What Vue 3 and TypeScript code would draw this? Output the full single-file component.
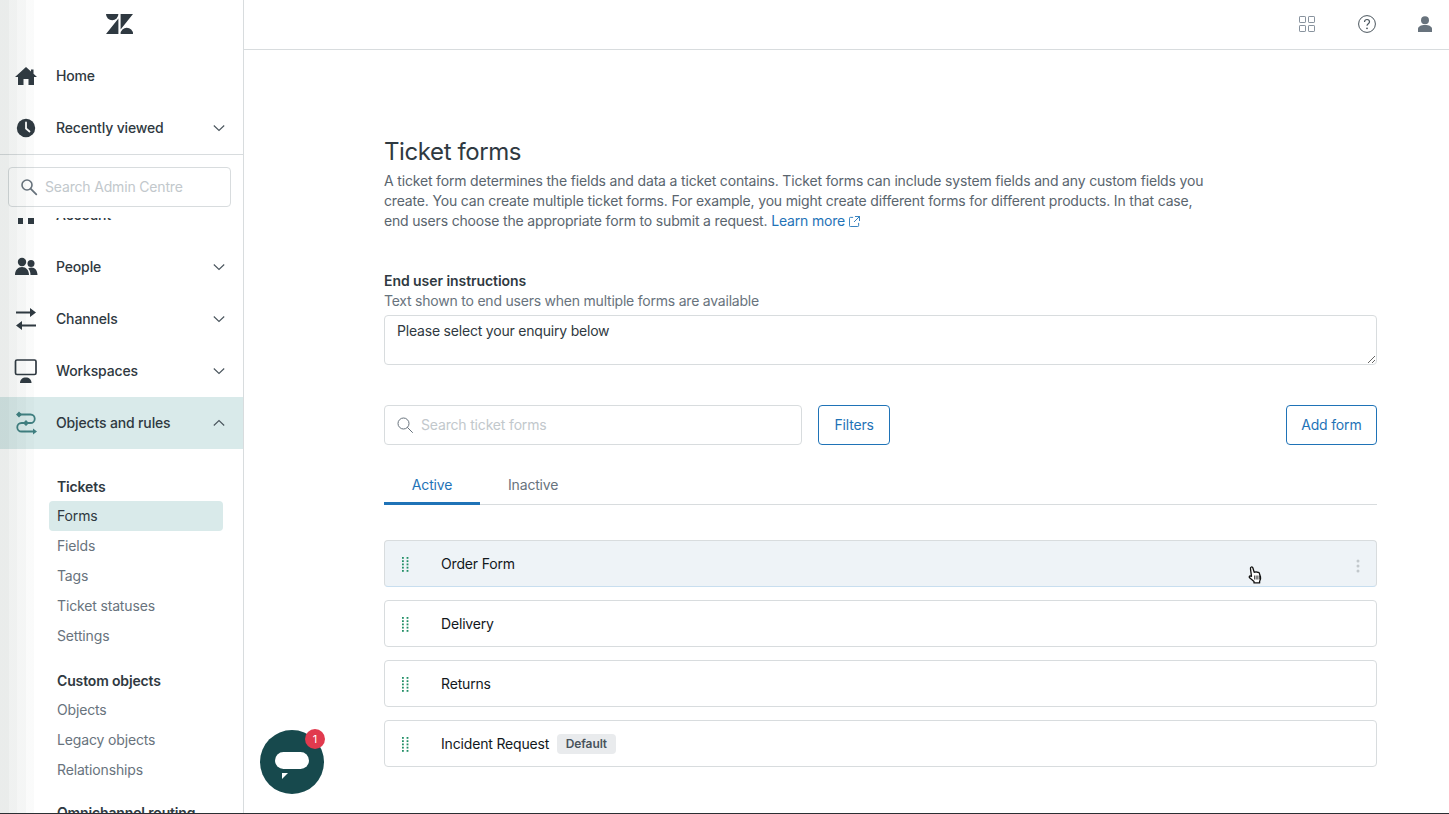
<script setup lang="ts">
import { ref } from 'vue'

interface NavItem { label: string; icon: string; chevron?: 'down' | 'up'; active?: boolean }
interface SubSection { title: string; items: { label: string; active?: boolean }[] }

const topNav: NavItem[] = [
  { label: 'Home', icon: 'home' },
  { label: 'Recently viewed', icon: 'clock', chevron: 'down' },
]
const scrollNav: NavItem[] = [
  { label: 'Account', icon: 'account' },
  { label: 'People', icon: 'people', chevron: 'down' },
  { label: 'Channels', icon: 'channels', chevron: 'down' },
  { label: 'Workspaces', icon: 'workspaces', chevron: 'down' },
  { label: 'Objects and rules', icon: 'objects', chevron: 'up', active: true },
]
const sections: SubSection[] = [
  { title: 'Tickets', items: [{ label: 'Forms', active: true }, { label: 'Fields' }, { label: 'Tags' }, { label: 'Ticket statuses' }, { label: 'Settings' }] },
  { title: 'Custom objects', items: [{ label: 'Objects' }, { label: 'Legacy objects' }, { label: 'Relationships' }] },
  { title: 'Omnichannel routing', items: [] },
]
const forms = [
  { name: 'Order Form', hover: true },
  { name: 'Delivery' },
  { name: 'Returns' },
  { name: 'Incident Request', tag: 'Default' },
]
const instructions = ref('Please select your enquiry below')
const gripDots = [0, 1, 2, 3, 4].flatMap((r) => [0, 1].map((c) => ({ x: c * 4.6, y: r * 3.25 })))
</script>

<template>
  <div class="app">
    <aside class="sidebar">
      <div class="logo">
        <svg width="27" height="20" viewBox="0 0 27 20">
          <path fill="#2f3941" d="M12.4 4.6V20H0zM12.4 0a6.2 6.2 0 0 1-12.4 0zM14.6 20a6.2 6.2 0 0 1 12.4 0zM14.6 15.400V0H27z" />
        </svg>
      </div>
      <div v-for="item in topNav" :key="item.label" class="nav-item top">
        <span class="nav-icon">
          <svg v-if="item.icon === 'home'" width="24" height="24" viewBox="0 0 24 24"><path fill="#2f3941" d="M12 4l5 4.500V6.500h2.500v4.200L23 14h-3v8h-5.500v-6h-5v6H4v-8H1z" /></svg>
          <svg v-else class="clock" width="20" height="20" viewBox="0 0 20 20"><circle cx="10" cy="10" r="9.200" fill="#2f3941" /><path d="M10 4.500V10.500l3.500 3" fill="none" stroke="#fff" stroke-width="1.800" stroke-linecap="round" /></svg>
        </span>
        <span class="nav-label">{{ item.label }}</span>
        <svg v-if="item.chevron" class="chev" width="12" height="12" viewBox="0 0 12 12"><path d="M.8 3.500 6 8.500l5.200-5" fill="none" stroke="#49545c" stroke-width="1.100" /></svg>
      </div>
      <div class="search-wrap">
        <label class="side-search">
          <svg width="18" height="18" viewBox="0 0 18 18"><circle cx="7" cy="7" r="5" fill="none" stroke="#68737d" stroke-width="1.600" /><path d="m10.800 10.800 5.500 5.500" stroke="#68737d" stroke-width="1.800" stroke-linecap="round" /></svg>
          <input placeholder="Search Admin Centre" />
        </label>
      </div>
      <div class="scroll">
        <div class="scroll-inner">
          <div v-for="item in scrollNav" :key="item.label" class="nav-item" :class="{ active: item.active }">
            <span class="nav-icon">
              <svg v-if="item.icon === 'account'" width="22" height="22" viewBox="0 0 22 22"><path fill="#2f3941" d="M4 2h5v18H4zM14 2h6v18h-6z" /></svg>
              <svg v-else-if="item.icon === 'people'" width="24" height="20" viewBox="0 0 24 20"><circle cx="8" cy="5" r="4.200" fill="#2f3941" /><circle cx="17" cy="6.500" r="3.500" fill="#2f3941" /><path fill="#2f3941" d="M1 18c0-5 3-8 7-8s7 3 7 8zM16.500 18c0-3-.8-5-2.300-6.500 1-.7 2-1 3.300-1 3.500 0 6 3 6 7.500z" /></svg>
              <svg v-else-if="item.icon === 'channels'" width="24" height="24" viewBox="0 0 24 24"><path fill="#2f3941" d="M2 4.500h14V1l6 4.500-6 4.500V6.500H2zM22 17.500H8V14l-6 4.500L8 23v-3.500h14z" /></svg>
              <svg v-else-if="item.icon === 'workspaces'" width="24" height="24" viewBox="0 0 24 24"><rect x="1.500" y="1" width="20.500" height="14.500" rx="1.500" fill="none" stroke="#2f3941" stroke-width="1.700" /><path fill="#2f3941" d="M6 24c0-3.500 2.500-5.500 5.800-5.500s5.700 2 5.700 5.500z" /></svg>
              <svg v-else width="24" height="24" viewBox="0 0 24 24"><g fill="none" stroke="#3f7f80" stroke-width="1.800"><path d="M5 3.500h11.500a4 4 0 0 1 0 8.500H7.500a4 4 0 0 0 0 8.500H20" /></g><path fill="#3f7f80" d="m5 .5 3 3-3 3-3-3zM12 9l3 3-3 3-3-3zM19 17.500l4 3-4 3z" /></svg>
            </span>
            <span class="nav-label">{{ item.label }}</span>
            <svg v-if="item.chevron === 'down'" class="chev" width="12" height="12" viewBox="0 0 12 12"><path d="M.8 3.500 6 8.500l5.200-5" fill="none" stroke="#49545c" stroke-width="1.100" /></svg>
            <svg v-else-if="item.chevron === 'up'" class="chev" width="12" height="12" viewBox="0 0 12 12"><path d="M.8 8.500 6 3.500l5.200 5" fill="none" stroke="#49545c" stroke-width="1.100" /></svg>
          </div>
          <div class="sub">
            <section v-for="s in sections" :key="s.title" class="sub-section">
              <div class="sub-title">{{ s.title }}</div>
              <div v-for="i in s.items" :key="i.label" class="sub-item" :class="{ active: i.active }">{{ i.label }}</div>
            </section>
          </div>
        </div>
      </div>
      <div class="stripes"></div>
    </aside>

    <div class="main">
      <header class="topbar">
        <svg class="grid" width="16" height="16" viewBox="0 0 16 16"><g fill="none" stroke="#87929d" stroke-width="1"><rect x=".5" y=".5" width="6" height="6" rx=".6" /><rect x="9.500" y=".5" width="6" height="6" rx=".6" /><rect x=".5" y="9.500" width="6" height="6" rx=".6" /><rect x="9.500" y="9.500" width="6" height="6" rx=".6" /></g></svg>
        <svg width="18" height="18" viewBox="0 0 18 18"><circle cx="9" cy="9" r="8.400" fill="none" stroke="#49545c" stroke-width="1" /><path d="M6.500 7c0-1.500 1.100-2.500 2.500-2.500s2.500 1 2.500 2.300c0 1.800-2.500 2-2.500 4" fill="none" stroke="#49545c" stroke-width="1.200" /><circle cx="9" cy="13.300" r=".9" fill="#49545c" /></svg>
        <svg width="16" height="16" viewBox="0 0 16 16"><circle cx="8" cy="4.200" r="4" fill="#68737d" /><path fill="#68737d" d="M1 16v-3c0-2.500 3-4 7-4s7 1.500 7 4v3z" /></svg>
      </header>
      <main class="content">
        <h1>Ticket forms</h1>
        <p class="desc">
          A ticket form determines the fields and data a ticket contains. Ticket forms can include system fields and any custom fields you create. You can create multiple ticket forms. For example, you might create different forms for different products. In that case, end users choose the appropriate form to submit a request.
          <a class="link">Learn more<svg width="11" height="11" viewBox="0 0 12 12"><path d="M4.500 1.500H1.500a1 1 0 0 0-1 1v8a1 1 0 0 0 1 1h8a1 1 0 0 0 1-1v-3M6.500.5h5v5M11.500.5l-6 6" fill="none" stroke="#1f73b7" stroke-width="1" /></svg></a>
        </p>
        <div class="field-label">End user instructions</div>
        <div class="field-hint">Text shown to end users when multiple forms are available</div>
        <textarea v-model="instructions" class="instructions"></textarea>
        <div class="toolbar">
          <label class="main-search">
            <svg width="16" height="16" viewBox="0 0 16 16"><circle cx="6.500" cy="6.500" r="5.500" fill="none" stroke="#68737d" stroke-width="1" /><path d="m10.500 10.500 5 5" stroke="#68737d" stroke-width="1" stroke-linecap="round" /></svg>
            <input placeholder="Search ticket forms" />
          </label>
          <button class="btn">Filters</button>
          <span class="spacer"></span>
          <button class="btn add">Add form</button>
        </div>
        <nav class="tabs">
          <span class="tab on">Active</span>
          <span class="tab">Inactive</span>
        </nav>
        <ul class="rows">
          <li v-for="f in forms" :key="f.name" class="row" :class="{ hover: f.hover }">
            <svg class="grip" width="7" height="15" viewBox="0 0 7 15"><rect v-for="(d, i) in gripDots" :key="i" :x="d.x" :y="d.y" width="1.800" height="1.800" fill="#228f67" /></svg>
            <span class="row-name">{{ f.name }}</span>
            <span v-if="f.tag" class="tag">{{ f.tag }}</span>
            <template v-if="f.hover">
              <svg class="cursor" width="16" height="18" viewBox="0 0 16 18"><path d="M4 1.200c.8-.6 1.600-.2 1.900.8l1.300 4.300c.5-.6 1.300-.6 1.700-.1.500-.4 1.300-.4 1.700.2.600-.3 1.400 0 1.700.7l1.200 3.900c.4 1.800 0 3.200-.9 4.400v1.500H7v-1.300L2.600 11.800c-.6-.7-.4-1.700.4-1.900l1.500.5L3.500 2.800c-.1-.7 0-1.300.5-1.600z" fill="#fff" stroke="#111" stroke-width="1.300" stroke-linejoin="round" /><path d="M7.800 9.500v4M10 9.500v4M12.200 9.500v4" stroke="#111" stroke-width="1" /></svg>
              <svg class="kebab" width="4" height="14" viewBox="0 0 4 14"><g fill="#c2c8cc"><circle cx="2" cy="2" r="1.500" /><circle cx="2" cy="7" r="1.500" /><circle cx="2" cy="12" r="1.500" /></g></svg>
            </template>
          </li>
        </ul>
      </main>
    </div>

    <div class="chat">
      <svg width="34" height="28" viewBox="0 0 34 28"><rect width="34" height="17" rx="8.500" fill="#fff" /><path fill="#fff" d="M7 21h6l-6 6z" /></svg>
      <span class="badge">1</span>
    </div>
    <div class="bottom-line"></div>
  </div>
</template>

<style>
html, body { margin: 0; height: 100%; overflow: hidden; background: #fff; }
</style>

<style scoped>
.app { position: relative; display: flex; height: 814px; overflow: hidden; font-family: Inter, "Liberation Sans", sans-serif; font-size: 14px; color: #2f3941; letter-spacing: -0.17px; }
.sidebar { position: relative; width: 243px; flex: none; display: flex; flex-direction: column; border-right: 1px solid #d8dcde; background: #fff; }
.logo { height: 50px; flex: none; display: flex; align-items: center; justify-content: center; padding-bottom: 2px; box-sizing: border-box; }
.logo svg { margin-left: -4px; }
.nav-item { height: 52px; flex: none; display: flex; align-items: center; font-weight: 500; color: #2f3941; letter-spacing: -0.15px; }
.nav-item.top { box-sizing: border-box; padding-bottom: 2px; }
.nav-item.active { background: #d9eaea; }
.nav-icon { width: 56px; flex: none; box-sizing: border-box; padding-left: 14px; display: flex; align-items: center; }
.clock { margin-top: 2px; margin-left: 2px; }
.nav-label { flex: 1; }
.scroll .nav-label { margin-top: -2px; }
.chev { margin-right: 18px; }
.top .chev { margin-top: 2px; }
.search-wrap { flex: none; height: 64px; box-sizing: border-box; border-top: 1px solid #d8dcde; padding: 12px 12px 0 8px; background: #fff; }
.side-search { display: flex; align-items: center; gap: 7px; height: 40px; box-sizing: border-box; border: 1px solid #d8dcde; border-radius: 4px; padding-left: 11px; padding-bottom: 1px; background: #fff; }
input { border: 0; outline: 0; padding: 0; flex: 1; min-width: 0; font: inherit; letter-spacing: inherit; background: transparent; color: #2f3941; }
input::placeholder { color: #c2c8cc; opacity: 1; }
.scroll { flex: 1; overflow: hidden; min-height: 0; }
.scroll-inner { margin-top: -29px; }
.sub { padding: 24px 20px 0 49px; }
.sub-section { margin-bottom: 16px; }
.sub-section:nth-child(2) { margin-bottom: 14px; }
.sub-title { height: 28px; line-height: 28px; padding-left: 8px; font-weight: 600; color: #2f3941; letter-spacing: -0.15px; }
.sub-item { height: 30px; line-height: 30px; padding-left: 8px; color: #68737d; letter-spacing: -0.15px; }
.sub-item.active { background: #d9eaea; color: #2f3941; border-radius: 4px; }
.stripes { position: absolute; inset: 0 auto 0 0; width: 34px; pointer-events: none; background: linear-gradient(90deg, rgba(47,70,60,.1) 0 9px, rgba(47,70,60,.075) 9px 17px, rgba(47,70,60,.05) 17px 26px, rgba(47,70,60,.025) 26px 34px); }

.main { flex: 1; min-width: 0; display: flex; flex-direction: column; }
.topbar { height: 50px; flex: none; box-sizing: border-box; border-bottom: 1px solid #d8dcde; display: flex; align-items: center; justify-content: flex-end; gap: 41px; padding: 0 16px 2px 0; }
.grid { margin-right: 2px; }
.content { padding: 86px 72px 0 140px; }
h1 { margin: 0; font-size: 24px; line-height: 32px; font-weight: 400; color: #2f3941; letter-spacing: -0.4px; }
.desc { margin: 3px 0 0; width: 830px; line-height: 20px; color: #5a656e; }
.link { color: #1f73b7; white-space: nowrap; }
.link svg { vertical-align: -1px; margin-left: 4px; }
.field-label { margin-top: 40px; line-height: 20px; font-weight: 600; letter-spacing: -0.06px; }
.field-hint { line-height: 20px; color: #68737d; letter-spacing: -0.22px; }
.instructions { display: block; box-sizing: border-box; width: 100%; height: 50px; margin-top: 4px; padding: 5px 12px; border: 1px solid #d8dcde; border-radius: 4px; font: inherit; letter-spacing: -0.2px; line-height: 20px; color: #2f3941; outline: 0; resize: vertical; background: #fff; }
.toolbar { display: flex; align-items: center; gap: 16px; margin-top: 40px; height: 40px; }
.main-search { width: 418px; height: 40px; flex: none; box-sizing: border-box; display: flex; align-items: center; gap: 8px; padding-left: 12px; padding-bottom: 1px; border: 1px solid #d8dcde; border-radius: 4px; }
.btn { height: 40px; box-sizing: border-box; padding: 0 15.500px 1px; border: 1px solid #1f73b7; border-radius: 4px; background: #fff; color: #1f73b7; font: inherit; letter-spacing: inherit; }
.btn.add { padding: 0 14.500px 1px; }
.spacer { flex: 1; }
.tabs { display: flex; margin-top: 20px; height: 40px; box-sizing: border-box; border-bottom: 1px solid #d8dcde; }
.tab { height: 40px; box-sizing: border-box; line-height: 40px; padding: 0 28px; color: #68737d; }
.tab.on { width: 96px; color: #1f73b7; border-bottom: 3px solid #1f73b7; padding: 0; text-align: center; }
.rows { list-style: none; margin: 35px 0 0; padding: 0; display: flex; flex-direction: column; gap: 13px; }
.row { position: relative; height: 47px; box-sizing: border-box; display: flex; align-items: center; border: 1px solid #d8dcde; border-radius: 4px; padding-left: 17px; color: #12181c; }
.row.hover { background: #eef3f7; border-bottom-color: #c8deef; }
.grip { flex: none; margin-right: 32px; margin-top: 2px; }
.tag { margin-left: 8px; height: 20px; line-height: 20px; padding: 0 8.500px; border-radius: 4px; background: #e9ebed; color: #49545c; font-size: 12px; font-weight: 600; letter-spacing: -0.1px; }
.cursor { position: absolute; left: 862px; top: 25px; }
.kebab { position: absolute; right: 16px; top: 18px; }
.chat { position: absolute; left: 260px; top: 730px; width: 64px; height: 64px; border-radius: 50%; background: #17494d; display: flex; align-items: center; justify-content: center; padding-top: 8px; box-sizing: border-box; }
.badge { position: absolute; top: -1px; right: -1px; width: 20px; height: 20px; border-radius: 50%; background: #e13a4e; color: #fff; font-size: 11px; line-height: 20px; text-align: center; }
.bottom-line { position: absolute; left: 0; right: 0; bottom: 0; height: 1px; background: #2b2f33; }
</style>
